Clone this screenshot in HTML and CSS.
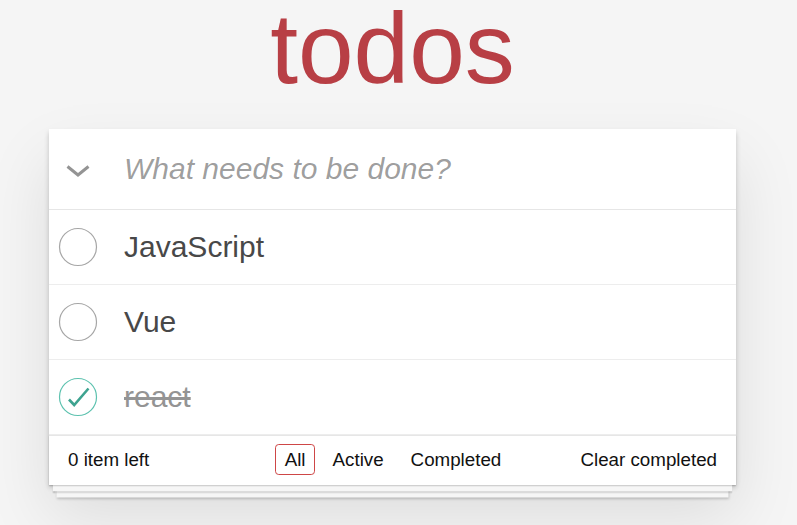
FILE: index.html
```html
<!DOCTYPE html>
<html lang="en">
<head>
<meta charset="utf-8">
<title>todos</title>
<link rel="stylesheet" href="styles.css">
</head>
<body>
<div class="app">
  <h1 class="title">todos</h1>
  <section class="card">
    <header class="head">
      <span class="toggle-all">
        <svg width="40" height="40" viewBox="0 0 40 40"><polyline points="9.5,15.5 20,24 30.5,15.5" fill="none" stroke="#949494" stroke-width="3"/></svg>
      </span>
      <input class="new-todo" type="text" placeholder="What needs to be done?">
    </header>
    <ul class="list">
      <li class="item">
        <span class="toggle"><svg width="40" height="40" viewBox="0 0 40 40"><circle cx="20" cy="20" r="18.5" fill="none" stroke="#a6a6a6" stroke-width="1.2"/></svg></span>
        <span class="label">JavaScript</span>
      </li>
      <li class="item">
        <span class="toggle"><svg width="40" height="40" viewBox="0 0 40 40"><circle cx="20" cy="20" r="18.5" fill="none" stroke="#a6a6a6" stroke-width="1.2"/></svg></span>
        <span class="label">Vue</span>
      </li>
      <li class="item done">
        <span class="toggle"><svg width="40" height="40" viewBox="0 0 40 40"><circle cx="20" cy="20" r="18.5" fill="none" stroke="#5dc2af" stroke-width="1.2"/><polyline points="11,22.5 16.2,28 30.5,11.5" fill="none" stroke="#3ea390" stroke-width="2.6"/></svg></span>
        <span class="label">react</span>
      </li>
    </ul>
    <footer class="foot">
      <span class="count">0 item left</span>
      <ul class="filters">
        <li><a class="filter selected" href="#/all">All</a></li>
        <li><a class="filter" href="#/active">Active</a></li>
        <li><a class="filter" href="#/completed">Completed</a></li>
      </ul>
      <span class="clear">Clear completed</span>
    </footer>
  </section>
</div>
</body>
</html>
```
FILE: styles.css
```css
html, body {
  margin: 0;
  padding: 0;
}
body {
  background: #f5f5f5;
  font-family: "Liberation Sans", Arial, sans-serif;
  color: #111;
  min-height: 525px;
}
.app {
  width: 687px;
  margin-left: 49px;
}
.title {
  margin: -2px 0 31px;
  font-size: 100px;
  line-height: 100px;
  font-weight: 200;
  color: #b83f45;
  text-align: center;
}
.card {
  background: #fff;
  box-shadow: 0 2.5px 5px 0 rgba(0,0,0,0.2), 0 31px 62px 0 rgba(0,0,0,0.1);
}
.head {
  display: flex;
  align-items: center;
  height: 80px;
  border-bottom: 1px solid #e6e6e6;
}
.toggle-all {
  display: flex;
  width: 40px;
  height: 40px;
  margin-left: 8.5px;
  margin-top: 3px;
}
.new-todo {
  flex: 1;
  margin-left: 26.5px;
  margin-bottom: 1px;
  border: none;
  outline: none;
  background: transparent;
  font-family: "Liberation Sans", Arial, sans-serif;
  font-size: 30px;
  color: #484848;
  padding: 0;
}
.new-todo::placeholder {
  font-style: italic;
  color: rgba(0,0,0,0.4);
}
.list {
  list-style: none;
  margin: 0;
  padding: 0;
}
.item {
  display: flex;
  align-items: center;
  height: 74px;
  border-bottom: 1px solid #ededed;
}
.toggle {
  display: flex;
  width: 40px;
  height: 40px;
  margin-left: 8.5px;
}
.label {
  margin-left: 26.5px;
  font-size: 30px;
  color: #484848;
}
.done .label {
  color: #949494;
  text-decoration: line-through;
}
.foot {
  display: grid;
  grid-template-columns: 1fr auto 1fr;
  align-items: center;
  height: 47px;
  padding: 0 19px 2px;
  border-top: 1px solid #e6e6e6;
  font-size: 18.75px;
  color: #111;
  box-shadow: 0 1.25px 1.25px rgba(0,0,0,0.2),
              0 10px 0 -3.75px #f6f6f6,
              0 11.25px 1.25px -3.75px rgba(0,0,0,0.2),
              0 20px 0 -7.5px #f6f6f6,
              0 21.25px 2.5px -7.5px rgba(0,0,0,0.2);
}
.count {
  justify-self: start;
}
.filters {
  display: flex;
  gap: 7.5px;
  list-style: none;
  margin: 0 0 0 1px;
  padding: 0;
}
.filter {
  display: block;
  padding: 3.75px 8.75px;
  border: 1.25px solid transparent;
  border-radius: 3.75px;
  color: inherit;
  text-decoration: none;
}
.filter.selected {
  border-color: #ce4646;
}
.clear {
  justify-self: end;
}
```
